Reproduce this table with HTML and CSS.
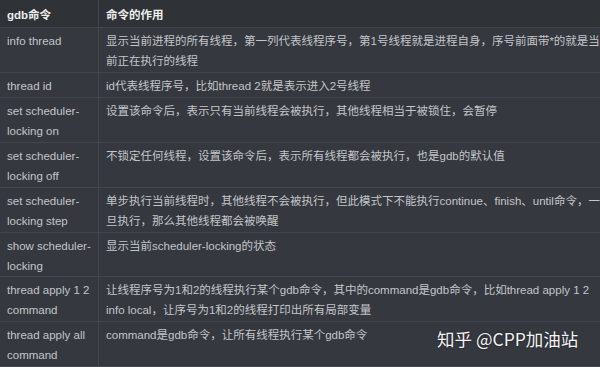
FILE: index.html
```html
<!DOCTYPE html>
<html lang="zh">
<head>
<meta charset="utf-8">
<link rel="stylesheet" href="styles.css">
</head>
<body>
<div class="page">
<table class="cmd-table">
  <thead>
    <tr><th class="col-cmd">gdb命令</th><th class="col-desc">命令的作用</th></tr>
  </thead>
  <tbody>
    <tr class="two"><td class="col-cmd">info thread</td><td class="col-desc">显示当前进程的所有线程，第一列代表线程序号，第1号线程就是进程自身，序号前面带*的就是当<br>前正在执行的线程</td></tr>
    <tr><td class="col-cmd">thread id</td><td class="col-desc">id代表线程序号，比如thread 2就是表示进入2号线程</td></tr>
    <tr class="two"><td class="col-cmd">set scheduler-<br>locking on</td><td class="col-desc">设置该命令后，表示只有当前线程会被执行，其他线程相当于被锁住，会暂停</td></tr>
    <tr class="two"><td class="col-cmd">set scheduler-<br>locking off</td><td class="col-desc">不锁定任何线程，设置该命令后，表示所有线程都会被执行，也是gdb的默认值</td></tr>
    <tr class="two"><td class="col-cmd">set scheduler-<br>locking step</td><td class="col-desc">单步执行当前线程时，其他线程不会被执行，但此模式下不能执行continue、finish、until命令，一<br>旦执行，那么其他线程都会被唤醒</td></tr>
    <tr class="two short"><td class="col-cmd">show scheduler-<br>locking</td><td class="col-desc">显示当前scheduler-locking的状态</td></tr>
    <tr class="two"><td class="col-cmd">thread apply 1 2<br>command</td><td class="col-desc">让线程序号为1和2的线程执行某个gdb命令，其中的command是gdb命令，比如thread apply 1 2<br>info local，让序号为1和2的线程打印出所有局部变量</td></tr>
    <tr class="two"><td class="col-cmd">thread apply all<br>command</td><td class="col-desc">command是gdb命令，让所有线程执行某个gdb命令</td></tr>
  </tbody>
</table>
<div class="watermark">知乎 @CPP加油站</div>
</div>
</body>
</html>
```
FILE: styles.css
```css
html, body {
  margin: 0;
  padding: 0;
  background: #35383e;
}
.page {
  position: relative;
  width: 600px;
  height: 367px;
  overflow: hidden;
  background: #35383e;
}
.cmd-table {
  width: 600px;
  border-collapse: collapse;
  font-family: "Liberation Sans", "Noto Sans CJK SC", sans-serif;
  font-size: 11.5px;
  color: #c3c6ca;
  table-layout: fixed;
}
.cmd-table th,
.cmd-table td {
  text-align: left;
  vertical-align: top;
  line-height: 20px;
  border-bottom: 1px solid #43464c;
  white-space: nowrap;
}
.cmd-table th {
  background: #2f3237;
  color: #eeeeee;
  font-weight: bold;
  padding: 5px 4px 2px 7px;
}
.cmd-table td {
  padding: 3px 4px 1px 7px;
}
.cmd-table .col-cmd {
  width: 87px;
  border-right: 1px solid #43464c;
}
.cmd-table .col-desc {
  padding-left: 7px;
}
.cmd-table tr.short td {
  padding-bottom: 0;
}
.watermark {
  position: absolute;
  left: 437px;
  top: 327px;
  font-family: "Noto Sans CJK SC", "Liberation Sans", sans-serif;
  font-size: 17.5px;
  line-height: 24px;
  color: #f4f4f4;
  text-shadow: 0 0 2px rgba(0, 0, 0, 0.6);
  white-space: nowrap;
}
```
